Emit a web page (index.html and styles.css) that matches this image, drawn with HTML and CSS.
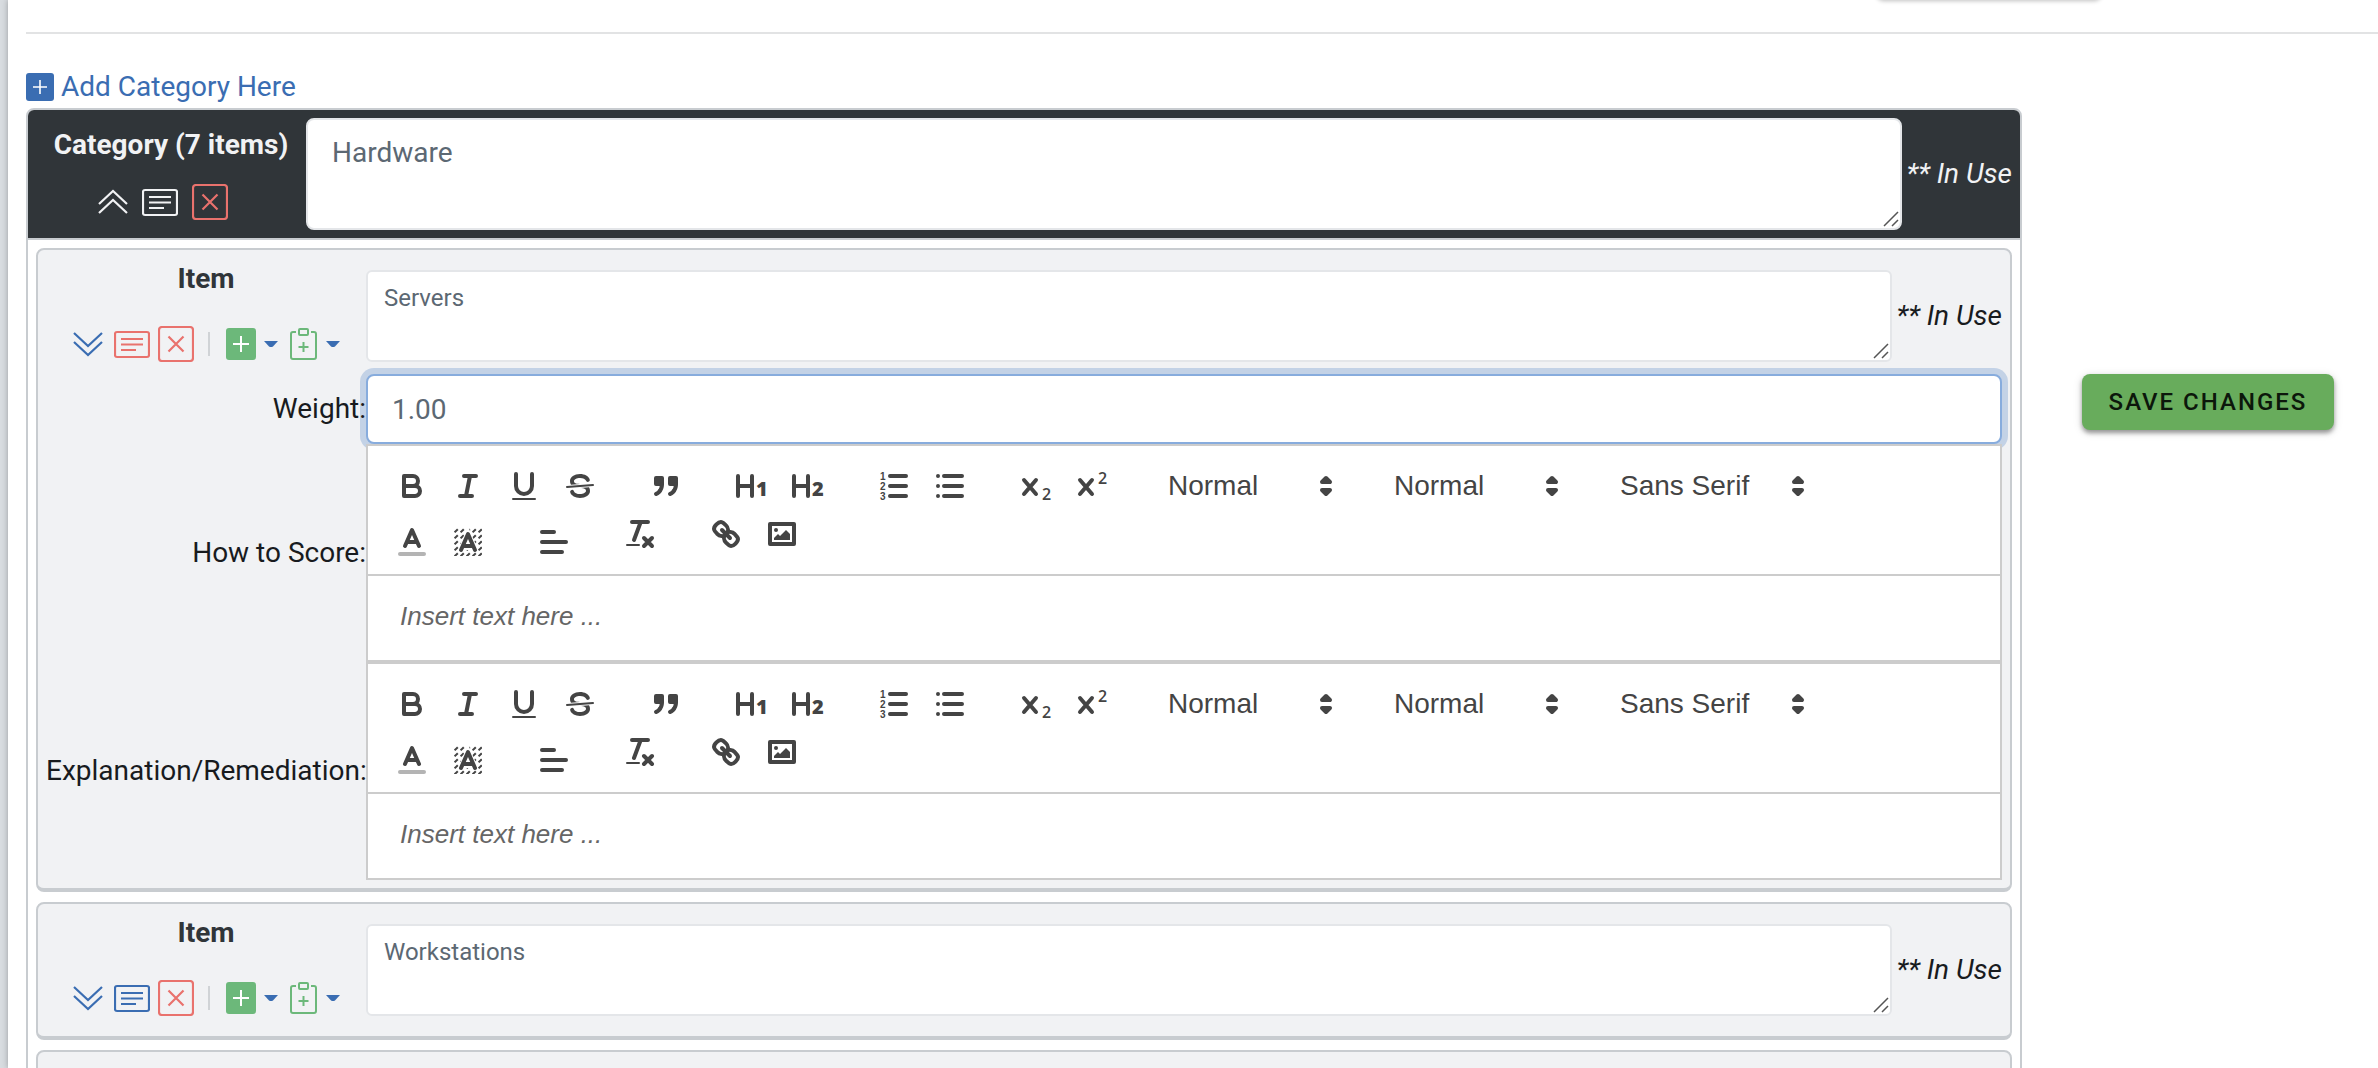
FILE: index.html
```html
<!DOCTYPE html>
<html lang="en">
<head>
<meta charset="utf-8">
<title>Edit Categories</title>
<link rel="stylesheet" href="styles.css">
</head>

<body>

<!-- icon sprite -->
<svg class="sprite" aria-hidden="true">
	<symbol id="i-plus-square" viewBox="0 0 28 28">
		<rect width="28" height="28" rx="3" fill="currentColor"/>
		<path d="M14 7V21M7 14H21" stroke="#fff" stroke-width="1.6"/>
	</symbol>
	<symbol id="i-plus-box" viewBox="0 0 30 32">
		<rect width="30" height="32" rx="3" fill="currentColor"/>
		<path d="M15 8V24M7 16H23" stroke="#fff" stroke-width="2"/>
	</symbol>
	<symbol id="i-up" viewBox="0 0 30 26">
		<path d="M1 15L15 2L29 15M1 24L15 11L29 24" fill="none" stroke="currentColor" stroke-width="2.200"/>
	</symbol>
	<symbol id="i-down" viewBox="0 0 30 26">
		<path d="M1 2L15 15L29 2M1 11L15 24L29 11" fill="none" stroke="currentColor" stroke-width="2.200"/>
	</symbol>
	<symbol id="i-card" viewBox="0 0 36 36">
		<rect x="1" y="6" width="34" height="25" rx="2" fill="none" stroke="currentColor" stroke-width="2.200"/>
		<path d="M7 13H29M7 18.500H29M7 24H22" fill="none" stroke="currentColor" stroke-width="2.200"/>
	</symbol>
	<symbol id="i-close" viewBox="0 0 36 36">
		<rect x="1" y="1" width="34" height="34" rx="3" fill="none" stroke="currentColor" stroke-width="2.200"/>
		<path d="M10.500 10.500L25.500 25.500M25.500 10.500L10.500 25.500" fill="none" stroke="currentColor" stroke-width="2.200"/>
	</symbol>
	<symbol id="i-clipboard" viewBox="0 0 28 32">
		<path d="M6 4H3A2 2 0 0 0 1 6V29A2 2 0 0 0 3 31H24A2 2 0 0 0 26 29V6A2 2 0 0 0 24 4H21M13.500 14V24M8.500 19H18.500" fill="none" stroke="currentColor" stroke-width="2"/>
		<rect x="9" y="1" width="9" height="6" rx="1" fill="none" stroke="currentColor" stroke-width="2"/>
	</symbol>
	<symbol id="i-caret" viewBox="0 0 14 6">
		<path d="M0 0H14L9 5.500Q7 6.500 5 5.500Z" fill="currentColor"/>
	</symbol>
	<symbol id="i-grip" viewBox="0 0 16 16">
		<path d="M1 15L15 1M9 15L15 9" fill="none" stroke="#555" stroke-width="1.500"/>
	</symbol>

	<!-- editor toolbar -->
	<symbol id="q-bold" viewBox="0 0 18 18">
		<path class="st" d="M5,4H9.5A2.5,2.5,0,0,1,12,6.5v0A2.5,2.5,0,0,1,9.5,9H5Z"/>
		<path class="st" d="M5,9h5.5A2.5,2.5,0,0,1,13,11.5v0A2.5,2.5,0,0,1,10.5,14H5Z"/>
	</symbol>
	<symbol id="q-italic" viewBox="0 0 18 18">
		<path class="st" d="M7 4H13M5 14H11M8 14L10 4"/>
	</symbol>
	<symbol id="q-underline" viewBox="0 0 18 18">
		<path class="st" d="M5,3V9a4,4,0,0,0,8,0V3"/>
		<rect class="fl" x="3" y="15" width="12" height="1" rx="0.5"/>
	</symbol>
	<symbol id="q-strike" viewBox="0 0 18 18">
		<path class="st thin" d="M15.5 8.500L2.500 9.500"/>
		<path class="fl" d="M9.007,8C6.542,7.791,6,7.519,6,6.5,6,5.792,7.283,5,9,5c1.571,0,2.765.679,2.969,1.309a1,1,0,0,0,1.9-.617C13.356,4.106,11.354,3,9,3,6.2,3,4,4.538,4,6.5a3.2,3.2,0,0,0,.5,1.843Z"/>
		<path class="fl" d="M8.984,10C11.457,10.208,12,10.479,12,11.5c0,0.708-1.283,1.5-3,1.5-1.571,0-2.765-.679-2.969-1.309a1,1,0,1,0-1.9.617C4.644,13.894,6.646,15,9,15c2.8,0,5-1.538,5-3.5a3.2,3.2,0,0,0-.5-1.843Z"/>
	</symbol>
	<symbol id="q-quote" viewBox="0 0 18 18">
		<rect class="st fl" x="4" y="5" width="3" height="3"/>
		<rect class="st fl" x="11" y="5" width="3" height="3"/>
		<path class="st fl" d="M7,8c0,4.031-3,5-3,5"/>
		<path class="st fl" d="M14,8c0,4.031-3,5-3,5"/>
	</symbol>
	<symbol id="q-head" viewBox="0 0 18 18">
		<path class="st" d="M2 4V14M9 4V14M2 9H9"/>
	</symbol>
	<symbol id="q-ol" viewBox="0 0 18 18">
		<path class="st" d="M7 4H15M7 9H15M7 14H15"/>
	</symbol>
	<symbol id="q-ul" viewBox="0 0 18 18">
		<path class="st" d="M6 4H15M6 9H15M6 14H15M3 4V4M3 9V9M3 14V14"/>
	</symbol>
	<symbol id="q-script" viewBox="0 0 18 18">
		<path class="st" d="M3 6L9 13M9 6L3 13"/>
	</symbol>
	<symbol id="q-arrows" viewBox="0 0 18 18">
		<path class="st fl" d="M7 11L9 13L11 11ZM7 7L9 5L11 7Z"/>
	</symbol>
	<symbol id="q-color" viewBox="0 0 18 18">
		<path class="st" opacity="0.4" d="M3 15H15"/>
		<path class="st" d="M5.500 11L9 3L12.500 11M11.630 9H6.380"/>
	</symbol>
	<symbol id="q-back" viewBox="0 0 18 18">
		<rect x="2" y="2" width="14" height="14" fill="url(#hatch)"/>
		<path d="M5.500 13L9 5L12.500 13" fill="#fff" stroke="#fff" stroke-width="3"/>
		<path class="st" d="M5.500 13L9 5L12.500 13M11.630 11H6.380"/>
	</symbol>
	<symbol id="q-align" viewBox="0 0 18 18">
		<path class="st" d="M3 4H9M3 9H15M3 14H13"/>
	</symbol>
	<symbol id="q-clean" viewBox="0 0 18 18">
		<path class="st" d="M5 3H13M6 12L9.350 3M11 11L15 15M15 11L11 15"/>
		<rect class="fl" x="2" y="14" width="7" height="1" rx="0.5"/>
	</symbol>
	<symbol id="q-link" viewBox="0 0 18 18">
		<path class="st" d="M7 7L11 11"/>
		<path class="st" d="M8.9,4.577a3.476,3.476,0,0,1,.36,4.679A3.476,3.476,0,0,1,4.577,8.9C3.185,7.5,2.035,6.4,4.217,4.217S7.5,3.185,8.9,4.577Z"/>
		<path class="st" d="M13.423,9.1a3.476,3.476,0,0,0-4.679-.36,3.476,3.476,0,0,0,.36,4.679c1.392,1.392,2.5,2.542,4.679.36S14.815,10.5,13.423,9.1Z"/>
	</symbol>
	<symbol id="q-image" viewBox="0 0 18 18">
		<rect class="st" x="3" y="4" width="12" height="10"/>
		<circle class="fl" cx="6" cy="7" r="1"/>
		<path class="fl" d="M5 12V11L7 9L8 10L11 7L13 9V12Z"/>
	</symbol>
	<pattern id="hatch" x="2" y="2" width="3" height="3" patternUnits="userSpaceOnUse">
		<path d="M0.300 2.200L1.900 0.600" stroke="#444" stroke-width="1"/>
	</pattern>
</svg>

<div class="main">
	<div class="topbar"><button class="raised" type="button" aria-label="Options"></button></div>
	<a class="add" href="#"><svg><use href="#i-plus-square"/></svg>Add Category Here</a>

	<div class="columns">
	<div class="category">
		<div class="category-head">
			<div class="side">
				<label class="title" for="cat">Category (7 items)</label>
				<div class="actions">
					<button type="button" aria-label="Collapse"><svg class="chev"><use href="#i-up"/></svg></button>
					<button type="button" aria-label="Comments"><svg class="sq"><use href="#i-card"/></svg></button>
					<button type="button" class="red" aria-label="Delete"><svg class="sq"><use href="#i-close"/></svg></button>
				</div>
			</div>
			<div class="area"><textarea id="cat" class="big" placeholder="Hardware"></textarea><svg class="grip"><use href="#i-grip"/></svg></div>
			<i class="use">** In Use</i>
		</div>

		<div class="item">
			<div class="item-head">
				<div class="side">
					<label class="title" for="item1">Item</label>
					<div class="actions">
						<button type="button" aria-label="Expand"><svg class="chev"><use href="#i-down"/></svg></button>
						<button type="button" class="red" aria-label="Comments"><svg class="sq"><use href="#i-card"/></svg></button>
						<button type="button" class="red" aria-label="Delete"><svg class="sq"><use href="#i-close"/></svg></button>
						<span class="sep"></span>
						<button type="button" class="drop" aria-label="Add item"><svg class="box"><use href="#i-plus-box"/></svg><svg class="caret"><use href="#i-caret"/></svg></button>
						<button type="button" class="drop" aria-label="Paste item"><svg class="clip"><use href="#i-clipboard"/></svg><svg class="caret"><use href="#i-caret"/></svg></button>
					</div>
				</div>
				<div class="area"><textarea id="item1" placeholder="Servers"></textarea><svg class="grip"><use href="#i-grip"/></svg></div>
				<i class="use">** In Use</i>
			</div>
			<div class="fields">
				<label for="weight">Weight:</label>
				<input id="weight" class="weight" type="text" placeholder="1.00">

				<label for="score">How to Score:</label>
				<div class="editor">
					<div class="toolbar">
						<span class="group">
							<button type="button" aria-label="Bold"><svg><use href="#q-bold"/></svg></button>
							<button type="button" aria-label="Italic"><svg><use href="#q-italic"/></svg></button>
							<button type="button" aria-label="Underline"><svg><use href="#q-underline"/></svg></button>
							<button type="button" aria-label="Strike"><svg><use href="#q-strike"/></svg></button>
						</span>
						<span class="group">
							<button type="button" aria-label="Quote"><svg><use href="#q-quote"/></svg></button>
						</span>
						<span class="group">
							<button type="button" aria-label="Heading 1"><svg viewBox="0 0 18 18"><use href="#q-head"/><text class="digit heavy" x="11" y="14">1</text></svg></button>
							<button type="button" aria-label="Heading 2"><svg viewBox="0 0 18 18"><use href="#q-head"/><text class="digit heavy" x="11" y="14">2</text></svg></button>
						</span>
						<span class="group">
							<button type="button" aria-label="Ordered list"><svg viewBox="0 0 18 18"><use href="#q-ol"/><text class="digit tiny" x="2" y="6">1</text><text class="digit tiny" x="2" y="11">2</text><text class="digit tiny" x="2" y="16">3</text></svg></button>
							<button type="button" aria-label="Bullet list"><svg><use href="#q-ul"/></svg></button>
						</span>
						<span class="group">
							<button type="button" aria-label="Subscript"><svg viewBox="0 0 18 18"><use href="#q-script"/><text class="digit" x="12" y="16">2</text></svg></button>
							<button type="button" aria-label="Superscript"><svg viewBox="0 0 18 18"><use href="#q-script"/><text class="digit" x="12" y="8">2</text></svg></button>
						</span>
						<span class="group pick"><select aria-label="Size"><option>Normal</option></select><svg><use href="#q-arrows"/></svg></span>
						<span class="group pick"><select aria-label="Heading"><option>Normal</option></select><svg><use href="#q-arrows"/></svg></span>
						<span class="group pick wide"><select aria-label="Font"><option>Sans Serif</option></select><svg><use href="#q-arrows"/></svg></span>
						<span class="group low">
							<button type="button" aria-label="Text color"><svg><use href="#q-color"/></svg></button>
							<button type="button" aria-label="Background"><svg><use href="#q-back"/></svg></button>
						</span>
						<span class="group low">
							<button type="button" aria-label="Align"><svg><use href="#q-align"/></svg></button>
						</span>
						<span class="group">
							<button type="button" aria-label="Clear format"><svg><use href="#q-clean"/></svg></button>
						</span>
						<span class="group">
							<button type="button" aria-label="Link"><svg><use href="#q-link"/></svg></button>
							<button type="button" aria-label="Image"><svg><use href="#q-image"/></svg></button>
						</span>
					</div>
					<textarea id="score" placeholder="Insert text here ..."></textarea>
				</div>

				<label for="explain">Explanation/Remediation:</label>
				<div class="editor">
					<div class="toolbar">
						<span class="group">
							<button type="button" aria-label="Bold"><svg><use href="#q-bold"/></svg></button>
							<button type="button" aria-label="Italic"><svg><use href="#q-italic"/></svg></button>
							<button type="button" aria-label="Underline"><svg><use href="#q-underline"/></svg></button>
							<button type="button" aria-label="Strike"><svg><use href="#q-strike"/></svg></button>
						</span>
						<span class="group">
							<button type="button" aria-label="Quote"><svg><use href="#q-quote"/></svg></button>
						</span>
						<span class="group">
							<button type="button" aria-label="Heading 1"><svg viewBox="0 0 18 18"><use href="#q-head"/><text class="digit heavy" x="11" y="14">1</text></svg></button>
							<button type="button" aria-label="Heading 2"><svg viewBox="0 0 18 18"><use href="#q-head"/><text class="digit heavy" x="11" y="14">2</text></svg></button>
						</span>
						<span class="group">
							<button type="button" aria-label="Ordered list"><svg viewBox="0 0 18 18"><use href="#q-ol"/><text class="digit tiny" x="2" y="6">1</text><text class="digit tiny" x="2" y="11">2</text><text class="digit tiny" x="2" y="16">3</text></svg></button>
							<button type="button" aria-label="Bullet list"><svg><use href="#q-ul"/></svg></button>
						</span>
						<span class="group">
							<button type="button" aria-label="Subscript"><svg viewBox="0 0 18 18"><use href="#q-script"/><text class="digit" x="12" y="16">2</text></svg></button>
							<button type="button" aria-label="Superscript"><svg viewBox="0 0 18 18"><use href="#q-script"/><text class="digit" x="12" y="8">2</text></svg></button>
						</span>
						<span class="group pick"><select aria-label="Size"><option>Normal</option></select><svg><use href="#q-arrows"/></svg></span>
						<span class="group pick"><select aria-label="Heading"><option>Normal</option></select><svg><use href="#q-arrows"/></svg></span>
						<span class="group pick wide"><select aria-label="Font"><option>Sans Serif</option></select><svg><use href="#q-arrows"/></svg></span>
						<span class="group low">
							<button type="button" aria-label="Text color"><svg><use href="#q-color"/></svg></button>
							<button type="button" aria-label="Background"><svg><use href="#q-back"/></svg></button>
						</span>
						<span class="group low">
							<button type="button" aria-label="Align"><svg><use href="#q-align"/></svg></button>
						</span>
						<span class="group">
							<button type="button" aria-label="Clear format"><svg><use href="#q-clean"/></svg></button>
						</span>
						<span class="group">
							<button type="button" aria-label="Link"><svg><use href="#q-link"/></svg></button>
							<button type="button" aria-label="Image"><svg><use href="#q-image"/></svg></button>
						</span>
					</div>
					<textarea id="explain" placeholder="Insert text here ..."></textarea>
				</div>
			</div>
		</div>

		<div class="item">
			<div class="item-head">
				<div class="side">
					<label class="title" for="item2">Item</label>
					<div class="actions">
						<button type="button" aria-label="Expand"><svg class="chev"><use href="#i-down"/></svg></button>
						<button type="button" aria-label="Comments"><svg class="sq"><use href="#i-card"/></svg></button>
						<button type="button" class="red" aria-label="Delete"><svg class="sq"><use href="#i-close"/></svg></button>
						<span class="sep"></span>
						<button type="button" class="drop" aria-label="Add item"><svg class="box"><use href="#i-plus-box"/></svg><svg class="caret"><use href="#i-caret"/></svg></button>
						<button type="button" class="drop" aria-label="Paste item"><svg class="clip"><use href="#i-clipboard"/></svg><svg class="caret"><use href="#i-caret"/></svg></button>
					</div>
				</div>
				<div class="area"><textarea id="item2" placeholder="Workstations"></textarea><svg class="grip"><use href="#i-grip"/></svg></div>
				<i class="use">** In Use</i>
			</div>
		</div>

		<div class="item next"></div>
	</div>

	<div class="save-col"><button class="save" type="button">SAVE CHANGES</button></div>
	</div>
</div>

</body>
</html>
```
FILE: styles.css
```css
*{
	box-sizing: border-box;
}
body{
	margin: 0;
	height: 100vh;
	overflow: hidden;
	background-color: #d8dce0;
	font-family: Roboto, sans-serif;
	font-size: 28px;
	line-height: 42px;
	color: #181b1e;
}
button, input, textarea, select{
	font-family: inherit;
	font-size: inherit;
	color: inherit;
	margin: 0;
}
button{
	border: none;
	background: none;
	padding: 0;
	display: flex;
	align-items: center;
}
svg{
	display: block;
}
.sprite{
	position: absolute;
	width: 0;
	height: 0;
}

.main{
	margin-left: 8px;
	padding-left: 18px;
	height: 100%;
	overflow: hidden;
	background-color: white;
	box-shadow: 0 0 6px rgba(0,0,0,0.3);
}
.topbar{
	display: flex;
	justify-content: flex-end;
	height: 34px;
	padding-right: 276px;
	border-bottom: 2px solid #e2e3e4;
}
.raised{
	width: 226px;
	height: 56px;
	margin-top: -56px;
	border-radius: 8px;
	background-color: white;
	box-shadow: 0 1px 4px rgba(0,0,0,0.25);
}
.add{
	display: flex;
	align-items: center;
	gap: 7px;
	height: 42px;
	margin: 32px 0 0;
	color: #3a6db2;
	text-decoration: none;
}
.add svg{
	width: 28px;
	height: 28px;
}

.columns{
	display: flex;
	align-items: flex-start;
}
.category{
	flex: 1;
	border: 2px solid #c8ccd0;
	border-radius: 8px 8px 0 0;
}
.category-head{
	display: flex;
	padding: 8px;
	background-color: #303539;
	border-bottom: 2px solid #c8ccd0;
	border-radius: 6px 6px 0 0;
	color: #f1f2f4;
}
.side{
	width: 320px;
	text-align: center;
}
.category-head .side{
	width: 270px;
	padding-top: 6px;
}
.title{
	display: block;
	height: 42px;
	font-weight: bold;
}
.item .title{
	color: #303539;
}
.actions{
	display: flex;
	justify-content: center;
	align-items: center;
	gap: 8px;
	height: 36px;
	color: #3a6db2;
}
.category-head .actions{
	gap: 14px;
	margin-top: 18px;
	padding-right: 16px;
	color: #f1f2f4;
}
.item .actions{
	margin-top: 26px;
}
.actions .red{
	color: #e9726d;
}
.chev{
	width: 30px;
	height: 26px;
}
.item .chev{
	margin-right: 3px;
}
.sq{
	width: 36px;
	height: 36px;
}
.sep{
	width: 2px;
	height: 24px;
	margin: 0 8px 0 6px;
	background-color: #d0d3d6;
}
.drop{
	gap: 8px;
}
.drop + .drop{
	margin-left: 4px;
}
.box{
	width: 30px;
	height: 32px;
	color: #6cb87a;
}
.clip{
	width: 28px;
	height: 32px;
	color: #6cb87a;
}
.caret{
	width: 14px;
	height: 6px;
}
.area{
	flex: 1;
	position: relative;
}
textarea{
	display: block;
	width: 100%;
	height: 92px;
	padding: 8px 16px;
	border: 2px solid #e4e6e9;
	border-radius: 6px;
	background-color: white;
	font-size: 24px;
	line-height: 36px;
	resize: none;
	outline: none;
}
textarea.big{
	height: 112px;
	padding: 12px 24px;
	border-radius: 8px;
	font-size: 28px;
	line-height: 42px;
}
::placeholder{
	color: #5c6873;
	opacity: 1;
}
.grip{
	position: absolute;
	right: 3px;
	bottom: 3px;
	width: 16px;
	height: 16px;
}
.use{
	width: 110px;
	align-self: center;
	text-align: right;
	white-space: nowrap;
}

.item{
	margin: 8px 8px 10px;
	padding: 0 8px;
	background-color: #f1f2f4;
	border: 2px solid #c8ccd0;
	border-bottom-width: 4px;
	border-radius: 8px;
}
.item-head{
	display: flex;
	padding: 20px 0;
}
.item-head .side{
	margin-top: -12px;
	height: 104px;
}
.next{
	height: 100px;
}
.fields{
	display: grid;
	grid-template-columns: 320px 1fr;
	align-items: center;
	margin-top: -8px;
	padding-bottom: 8px;
}
/* keeps the colon above the focus ring */
.fields > label{
	position: relative;
	z-index: 1;
	text-align: right;
	white-space: nowrap;
}
.weight{
	width: 100%;
	height: 70px;
	padding: 12px 24px;
	border: 2px solid #87acdd;
	border-radius: 8px;
	background-color: white;
	box-shadow: 0 0 0 6px #c3d2e6;
	outline: none;
}
.editor{
	position: relative;
	border: 2px solid #ccc;
	background-color: white;
	font-family: "Liberation Sans", Arial, sans-serif;
}
.toolbar{
	display: flex;
	flex-wrap: wrap;
	padding: 16px;
	border-bottom: 2px solid #ccc;
	color: #444;
}
.group{
	display: flex;
	height: 48px;
	margin-right: 30px;
}
.group button{
	width: 56px;
	height: 48px;
	padding: 6px 10px;
}
.group svg{
	width: 36px;
	height: 36px;
}
.low{
	margin-top: 8px;
	margin-bottom: -8px;
}
.pick{
	position: relative;
	width: 196px;
}
.pick.wide{
	width: 216px;
}
.pick select{
	appearance: none;
	width: 100%;
	padding: 0 18px 2px;
	border: none;
	background: none;
}
.pick svg{
	position: absolute;
	right: 2px;
	top: 6px;
	pointer-events: none;
}
.editor textarea{
	height: 84px;
	padding: 22px 32px;
	border: none;
	border-radius: 0;
	font-size: 26px;
}
.editor ::placeholder{
	color: #666;
	font-style: italic;
}
.st{
	fill: none;
	stroke: #444;
	stroke-width: 2;
	stroke-linecap: round;
	stroke-linejoin: round;
}
.fl{
	fill: #444;
}
.thin{
	stroke-width: 1;
}
.digit{
	fill: #444;
	font-family: "Open Sans", sans-serif;
	font-size: 8px;
	font-weight: 600;
}
.digit.heavy{
	font-size: 10px;
	font-weight: 800;
}
.digit.tiny{
	font-family: "Liberation Sans", Arial, sans-serif;
	font-size: 5px;
	font-weight: bold;
}

.save-col{
	width: 356px;
	padding: 266px 0 0 60px;
}
.save{
	justify-content: center;
	width: 252px;
	height: 56px;
	border-radius: 8px;
	background-color: #68ac5c;
	box-shadow: 0 3px 4px rgba(0,0,0,0.35), 0 2px 10px rgba(0,0,0,0.15);
	color: #0c170b;
	font-size: 24px;
	font-weight: 500;
	letter-spacing: 2px;
}
```
